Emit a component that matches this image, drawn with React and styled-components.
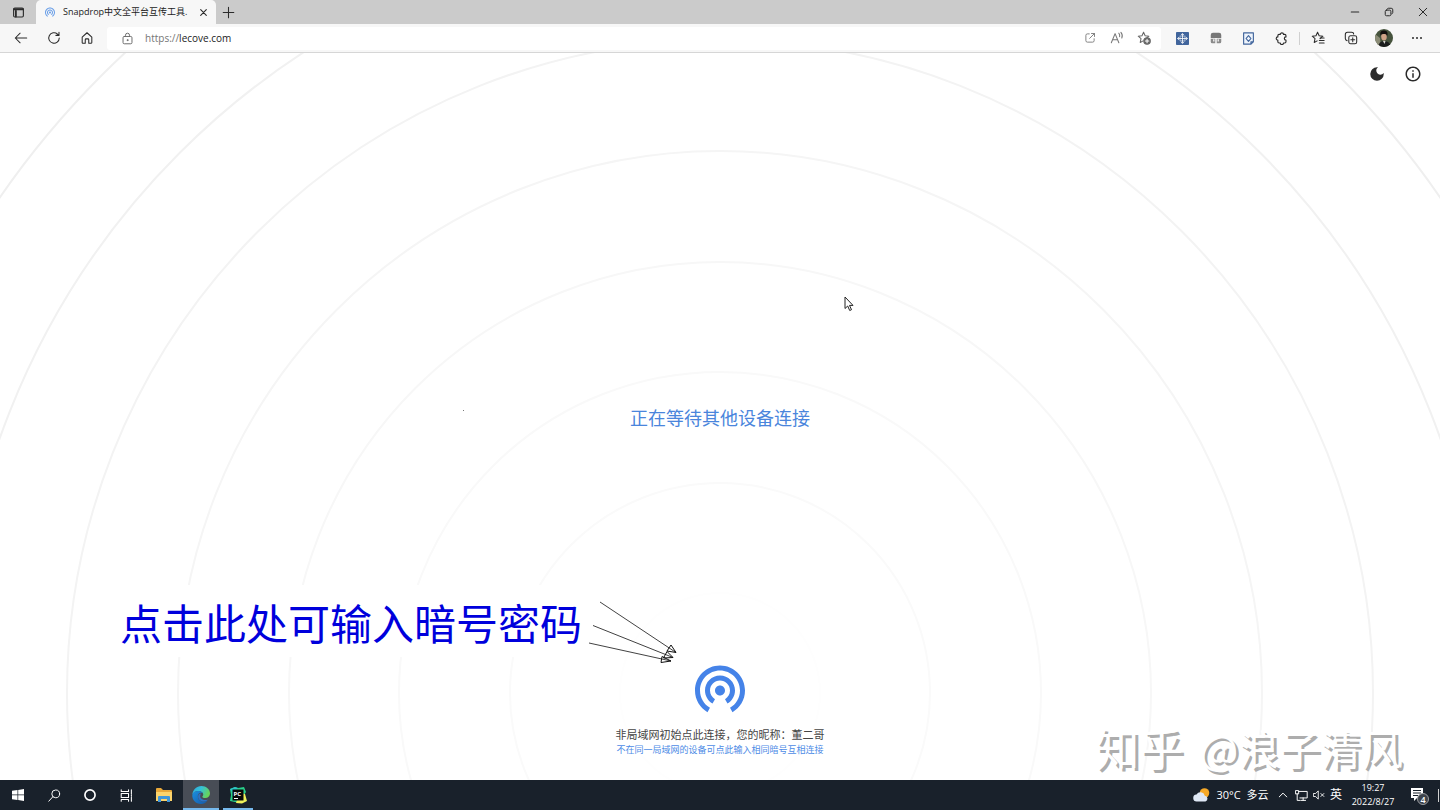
import React from 'react';
import styled, { createGlobalStyle } from 'styled-components';
import { MdDarkMode, MdOutlineInfo, MdWifiTethering } from 'react-icons/md';

const GlobalStyle = createGlobalStyle`
  * {
    box-sizing: border-box;
  }
  body {
    margin: 0;
    font-family: 'Open Sans', 'Noto Sans CJK SC', sans-serif;
    font-size: 9px;
    color: #333;
  }
  button {
    font: inherit;
    color: inherit;
    background: none;
    border: 0;
    padding: 0;
  }
  svg {
    display: block;
    flex: none;
  }
`;

const Desktop = styled.div`
  display: flex;
  flex-direction: column;
  min-height: 100vh;
  overflow: hidden;
`;

const TabStrip = styled.header`
  display: flex;
  height: 24px;
  background: #cbcbcb;
`;

const IconButton = styled.button`
  display: flex;
  align-items: center;
  justify-content: center;
  flex: none;
  width: ${(props) => props.$width || 33}px;
  height: 100%;
  color: ${(props) => props.$color || '#2b2b2b'};
`;

const Tab = styled.div`
  display: flex;
  align-items: center;
  gap: 7px;
  width: 180px;
  padding: 0 5px 0 8px;
  background: #f7f7f7;
  border-radius: 5px 5px 0 0;
`;

const TabTitle = styled.span`
  flex: 1;
  overflow: hidden;
  white-space: nowrap;
  line-height: 16px;
  color: #222;
`;

const WindowButtons = styled.div`
  display: flex;
  margin-left: auto;
`;

const Toolbar = styled.nav`
  display: flex;
  align-items: center;
  height: 29px;
  padding: 0 7px 0 4px;
  background: #f7f7f7;
  border-bottom: 1px solid #d6d6d6;
`;

const AddressBar = styled.label`
  display: flex;
  align-items: center;
  flex: 1;
  height: 23px;
  margin: 0 5px 0 4px;
  padding: 0 4px 0 14px;
  background: #fff;
  border-radius: 3px;
  font-size: 10px;
`;

const Scheme = styled.span`
  margin-left: 11px;
  color: #767676;
`;

const AddressInput = styled.input`
  flex: 1;
  min-width: 0;
  padding: 0;
  border: 0;
  outline: 0;
  background: none;
  font: inherit;
  color: #222;
`;

const Divider = styled.span`
  width: 1px;
  height: 13px;
  margin: 0 1px;
  background: #d0d0d0;
`;

/* every layer of the page shares the one grid cell */
const Stage = styled.main`
  position: relative;
  display: grid;
  grid-template: 1fr / 1fr;
  flex: 1;
  background: #fff;
  > * {
    grid-area: 1 / 1;
  }
`;

const RingsSvg = styled.svg`
  position: absolute;
  inset: 0;
  width: 100%;
  height: 100%;
`;

const StageActions = styled.div`
  z-index: 1;
  display: flex;
  align-self: start;
  justify-self: end;
  height: 42px;
  padding-right: 9px;
`;

const Waiting = styled.h1`
  place-self: center;
  z-index: 1;
  margin: 0;
  padding-top: 2px;
  font-size: 18px;
  font-weight: 400;
  line-height: 24px;
  color: #4a85dc;
`;

const Footer = styled.footer`
  z-index: 1;
  display: flex;
  flex-direction: column;
  align-items: center;
  align-self: end;
  justify-self: center;
  padding-bottom: 23px;
`;

const LogoButton = styled.button`
  margin-bottom: 9px;
  color: #4583e8;
`;

const DisplayName = styled.div`
  font-size: ${(props) => (props.$small ? 9 : 11)}px;
  line-height: ${(props) => (props.$small ? 14 : 16)}px;
  color: ${(props) => (props.$small ? '#4d8be6' : '#444')};
`;

const Callout = styled.div`
  position: absolute;
  left: 112px;
  bottom: 123px;
  z-index: 1;
  display: flex;
`;

const CalloutText = styled.p`
  margin: 0;
  padding: 6px 2px 0 8px;
  background: #fff;
  font-size: 42px;
  line-height: 66px;
  color: #0000dc;
`;

const Watermark = styled.div`
  position: absolute;
  right: 38px;
  bottom: 3px;
  z-index: 1;
  display: flex;
  align-items: center;
  gap: 16px;
  font-family: 'Noto Sans CJK SC', sans-serif;
  font-size: 41px;
  line-height: 60px;
  color: #fff;
  text-shadow: 3px 3px 0 #adadad;
`;

const WatermarkSite = styled.span`
  font-size: 44px;
`;

const Pointer = styled.svg`
  position: absolute;
  left: 844px;
  top: 243px;
`;

const Speck = styled.i`
  position: absolute;
  left: 463px;
  top: 357px;
  width: 1px;
  height: 1px;
  background: #777;
`;

const Taskbar = styled.nav`
  display: flex;
  height: 30px;
  background: #19212b;
  color: #fff;
`;

const Apps = styled.div`
  display: flex;
  gap: 1px;
  margin-left: 2px;
`;

const AppButton = styled.button`
  display: flex;
  align-items: center;
  justify-content: center;
  width: 36px;
  height: 100%;
  padding-bottom: 0;
  background: ${(props) => (props.$active ? '#484d56' : 'none')};
  box-shadow: ${(props) => (props.$active ? 'inset 0 -2px #76b9ed' : 'none')};
`;

const OpenMark = styled.span`
  display: flex;
  align-items: center;
  justify-content: center;
  width: 30px;
  height: 100%;
  box-shadow: inset 0 -2px #76b9ed;
`;

const Tray = styled.div`
  display: flex;
  align-items: center;
  margin-left: auto;
`;

const TrayButton = styled.button`
  display: flex;
  align-items: center;
  justify-content: center;
  gap: 6px;
  width: ${(props) => props.$width}px;
  height: 100%;
  font-size: ${(props) => props.$size || 11}px;
  line-height: 14px;
  white-space: nowrap;
`;

const Clock = styled.time`
  width: 56px;
  text-align: center;
  line-height: 14px;
`;

const Line = ({ size = 14, children, width = 1.2, ...rest }) => (
  <svg
    width={size}
    height={size}
    viewBox="0 0 16 16"
    fill="none"
    stroke="currentColor"
    strokeWidth={width}
    strokeLinecap="round"
    strokeLinejoin="round"
    {...rest}
  >
    {children}
  </svg>
);

const STAR = 'M7.5 1.5l1.8 3.9 4.3.5-3.2 2.9M7.5 1.5L5.7 5.4l-4.3.5 3.2 2.9-.9 4.3 3.3-1.8';

const RING_RADII = [100, 210, 321, 431, 542, 653, 764, 874];
const RING_COLORS = [
  '#fefefe',
  '#fafafa',
  '#f9f9f9',
  '#f7f7f7',
  '#f5f5f5',
  '#f3f3f3',
  '#f1f1f1',
  '#efefef',
];

const Rings = () => (
  <RingsSvg aria-hidden="true">
    <svg x="50%" y="100%" overflow="visible">
      {RING_RADII.map((r, i) => (
        <circle
          key={r}
          cy="-87"
          r={r}
          fill="none"
          stroke={RING_COLORS[i]}
          strokeWidth="2"
        />
      ))}
    </svg>
  </RingsSvg>
);

const Browser = () => (
  <>
    <TabStrip>
      <IconButton $width={36} aria-label="Tab actions">
        <Line size={13} width={1.4}>
          <rect x="2" y="2.5" width="12" height="11" rx="1.5" />
          <path d="M2.5 4h11M4.8 6v7" strokeWidth="2.2" />
        </Line>
      </IconButton>
      <Tab>
        <MdWifiTethering size={12} color="#6a9fe8" />
        <TabTitle>Snapdrop中文全平台互传工具.</TabTitle>
        <IconButton $width={16} aria-label="Close tab">
          <Line size={9} width={2}>
            <path d="M3 3l10 10M13 3L3 13" />
          </Line>
        </IconButton>
      </Tab>
      <IconButton $width={24} aria-label="New tab">
        <Line size={13} width={1.3}>
          <path d="M8 1.5v13M1.5 8h13" />
        </Line>
      </IconButton>
      <WindowButtons>
        <IconButton $width={34} aria-label="Minimize">
          <Line size={10} width={1.7}>
            <path d="M2 8h12" />
          </Line>
        </IconButton>
        <IconButton $width={34} aria-label="Restore">
          <Line size={10} width={1.6}>
            <rect x="2" y="5" width="9" height="9" rx="2" />
            <path d="M5 3.5Q5.5 2 7 2h4.5Q14 2 14 4.5V9q0 1.5-1.5 2" />
          </Line>
        </IconButton>
        <IconButton $width={34} aria-label="Close">
          <Line size={10} width={1.6}>
            <path d="M2 2l12 12M14 2L2 14" />
          </Line>
        </IconButton>
      </WindowButtons>
    </TabStrip>
    <Toolbar>
      <IconButton aria-label="Back">
        <Line>
          <path d="M14.5 8H1.5M7 2.5L1.5 8 7 13.5" />
        </Line>
      </IconButton>
      <IconButton aria-label="Refresh">
        <Line>
          <path d="M14 8a6 6 0 1 1-2-4.5L13.5 5M13.7 1.5V5h-3.5" />
        </Line>
      </IconButton>
      <IconButton aria-label="Home">
        <Line>
          <path d="M2.5 7L8 2l5.5 5v6q0 1-1 1H10V10q0-1-1-1H7q-1 0-1 1v4H3.5q-1 0-1-1z" />
        </Line>
      </IconButton>
      <AddressBar>
        <Line size={13} color="#6b6b6b">
          <rect x="2.5" y="5.5" width="11" height="9" rx="1.5" />
          <path d="M5.5 5.5V4a2.5 2.5 0 0 1 5 0v1.5" />
          <circle cx="8" cy="10" r=".6" fill="currentColor" />
        </Line>
        <Scheme>https://</Scheme>
        <AddressInput defaultValue="lecove.com" aria-label="Address" />
        <IconButton $width={27} $color="#777" aria-label="Open in app">
          <Line size={12}>
            <path d="M7 2.5H4.5q-2 0-2 2v7q0 2 2 2h7q2 0 2-2V9M10 2h4v4M14 2L7.5 8.5" />
          </Line>
        </IconButton>
        <IconButton $width={27} $color="#777" aria-label="Read aloud">
          <Line>
            <path d="M1.5 13.5L5.8 3l4.3 10.5M3 10h5.6M10 2.5q1.5 1.5 1 4M12.5 1.5q2.500 3 1 6.5" />
          </Line>
        </IconButton>
        <IconButton $width={27} $color="#666" aria-label="Add to favorites">
          <Line>
            <path d={STAR} />
            <circle cx="11.5" cy="11.5" r="3.7" fill="currentColor" />
            <path d="M11.5 9.5v4M9.5 11.5h4" stroke="#fff" />
          </Line>
        </IconButton>
      </AddressBar>
      <IconButton aria-label="Move extension">
        <Line size={13} width={1.3} color="#fff">
          <rect width="16" height="16" rx="1" fill="#41659c" stroke="none" />
          <path d="M8 2.5v11M2.5 8h11M6.5 3.5L8 2l1.5 1.5M6.5 12.5L8 14l1.5-1.5M3.5 6.5L2 8l1.5 1.5M12.5 6.5L14 8l-1.5 1.5" strokeWidth="1" />
          <path d="M5 5h6v6H5z" strokeWidth=".7" strokeDasharray="1 1" />
        </Line>
      </IconButton>
      <IconButton aria-label="Script extension">
        <svg width="12" height="12" viewBox="0 0 16 16" fill="#777">
          <path d="M1 8V4q0-3 3-3h8q3 0 3 3v4z" />
          <path d="M1 9h6v6H3q-2 0-2-2zM9 9h6v4q0 2-2 2H9z" fill="#8b8b8b" />
          <path d="M4 9.500h2v3H4zM10 9.500h2v3h-2z" fill="#e8e8e8" />
        </svg>
      </IconButton>
      <IconButton $color="#41659c" aria-label="Page extension">
        <Line size={13} width={1.4}>
          <path d="M2 1h12v11l-3 3H2zM14 12h-3v3" fill="#eef4fc" />
          <path d="M8 4.500L11 8l-3 3.500L5 8z" />
        </Line>
      </IconButton>
      <IconButton aria-label="Extensions">
        <Line size={13} width={1.4}>
          <path d="M5 3h1.5a2 2 0 0 1 4 0H12q1.5 0 1.5 1.5V6a2 2 0 1 0 0 4v2q0 1.500-1.500 1.500h-1.500a2 2 0 0 1-4 0H5q-1.500 0-1.500-1.500v-2a2 2 0 0 1 0-4V4.500Q3.500 3 5 3z" />
        </Line>
      </IconButton>
      <Divider />
      <IconButton aria-label="Favorites">
        <Line>
          <path d={STAR} />
          <path d="M10.500 8h4.500M9.500 10.800h5.500M9.500 13.600h5.500" />
        </Line>
      </IconButton>
      <IconButton aria-label="Collections">
        <Line>
          <rect x="5.5" y="5.5" width="9" height="9" rx="2" />
          <path d="M10 7.800v4.400M7.800 10h4.400M3.500 11Q1.500 10.500 1.500 8.500V4q0-2.500 2.500-2.500h4.500q2.500 0 2.500 2" />
        </Line>
      </IconButton>
      <IconButton aria-label="Profile">
        <svg width="18" height="18" viewBox="0 0 18 18">
          <clipPath id="avatar">
            <circle cx="9" cy="9" r="9" />
          </clipPath>
          <g clipPath="url(#avatar)">
            <rect width="18" height="18" fill="#46533d" />
            <path d="M0 5l5 4 1 9H0z" fill="#8b8c76" />
            <path d="M3 18q1-6 6-6 6 0 7 6z" fill="#1a1c1d" />
            <ellipse cx="9" cy="7.5" rx="2.8" ry="4" fill="#cfa387" />
            <path d="M5.500 7Q4 1 9.500 1.500 14 2 12 8 12 4.500 9 5 6 4.500 5.500 7z" fill="#14110f" />
            <path d="M8 12l1.500 3 1-3z" fill="#d8d8d2" />
          </g>
        </svg>
      </IconButton>
      <IconButton aria-label="Settings and more">
        <svg width="12" height="4" viewBox="0 0 12 4" fill="currentColor">
          <circle cx="2" cy="2" r="1" />
          <circle cx="6" cy="2" r="1" />
          <circle cx="10" cy="2" r="1" />
        </svg>
      </IconButton>
    </Toolbar>
  </>
);

const Snapdrop = () => (
  <Stage>
    <Rings />
    <StageActions>
      <IconButton $width={36} aria-label="Dark theme">
        <MdDarkMode size={18} />
      </IconButton>
      <IconButton $width={36} aria-label="About">
        <MdOutlineInfo size={18} />
      </IconButton>
    </StageActions>
    <Waiting>正在等待其他设备连接</Waiting>
    <Footer>
      <LogoButton aria-label="Connect">
        <MdWifiTethering size={60} />
      </LogoButton>
      <DisplayName>非局域网初始点此连接，您的昵称：董二哥</DisplayName>
      <DisplayName $small>不在同一局域网的设备可点此输入相同暗号互相连接</DisplayName>
    </Footer>
    <Callout>
      <CalloutText>点击此处可输入暗号密码</CalloutText>
      <svg width="96" height="72" viewBox="584 585 96 72" overflow="visible" fill="none" stroke="#111" strokeWidth="1">
        <path d="M600 602l76 50.500M593 625.500l80 32M589 643l82 18" strokeWidth=".8" />
        <path d="M671 645l5 7.500-9-1.500zM667 651.500l6 6-9.500.5zM662 656.500l9 4.500-10 1.500z" />
      </svg>
    </Callout>
    <Watermark>
      <WatermarkSite>知乎</WatermarkSite>
      <span>@浪子清风</span>
    </Watermark>
    <Speck />
    <Pointer width="10" height="16" viewBox="0 0 10 16" fill="#fff" stroke="#222">
      <path d="M1 1v11.500l2.700-2.500 2 4.500 1.800-.8-2-4.300H9z" />
    </Pointer>
  </Stage>
);

const WindowsTaskbar = () => (
  <Taskbar>
    <AppButton aria-label="Start">
      <svg width="12" height="12" viewBox="0 0 12 12" fill="#fff">
        <path d="M0 1.700L5.500 1v4.600H0zM6.200.9L12 0v5.600H6.200zM0 6.300h5.500V11L0 10.300zM6.200 6.300H12V12l-5.800-.9z" />
      </svg>
    </AppButton>
    <AppButton aria-label="Search">
      <Line size={13}>
        <circle cx="9.5" cy="6" r="4.8" />
        <path d="M6 9.500L1 15" />
      </Line>
    </AppButton>
    <AppButton aria-label="Cortana">
      <Line size={14} width={1.9}>
        <circle cx="8" cy="8" r="5.8" />
      </Line>
    </AppButton>
    <AppButton aria-label="Task view">
      <Line size={13} width={1.3}>
        <path d="M1.500 1v2h9V1M1.500 15v-2h9v2M1.500 5.500h9v5h-9zM14 1v5M14 10v5M14 7.500v1" />
      </Line>
    </AppButton>
    <Apps>
      <AppButton aria-label="File Explorer">
        <svg width="16" height="14" viewBox="0 0 16 14">
          <path d="M0 1q0-1 1-1h4l2 2h8q1 0 1 1v9H0z" fill="#e9a93a" />
          <path d="M0 4h16v9H0z" fill="#fbd36b" />
          <path d="M2 14V9q0-1 1-1h10q1 0 1 1v5h-3v-3H5v3z" fill="#3f96d8" />
        </svg>
      </AppButton>
      <AppButton $active aria-label="Edge">
        <svg width="18" height="18" viewBox="0 0 24 24">
          <defs>
            <linearGradient id="edgeTop" x1="0" y1="0" x2="1" y2=".4">
              <stop offset="0" stopColor="#2ba8dc" />
              <stop offset=".5" stopColor="#35c1d8" />
              <stop offset="1" stopColor="#66d45b" />
            </linearGradient>
            <linearGradient id="edgeBottom" x1="0" y1="0" x2="1" y2="1">
              <stop offset="0" stopColor="#1b8fe0" />
              <stop offset="1" stopColor="#1559a8" />
            </linearGradient>
          </defs>
          <path d="M.5 11.500C1 5 6 0 12.500 0 19 0 24 4.500 24 10c0 3.500-2.800 6-6.200 6-2.600 0-4-.9-4-1.800 0-.6 1.200-1 1.200-3.200C15 8.500 12 6.500 8.500 6.500 4.500 6.500 1.500 8.500.5 11.500z" fill="url(#edgeTop)" />
          <path d="M.4 12C1 8.500 4.500 6.500 8.500 6.500c3 0 5.200 1.300 6 3-5-1.500-7.500 2-6.500 6 1 4.500 6 6.500 12.500 3.800C18.500 22.500 15.500 24 12 24 5 24 0 18.500.4 12z" fill="url(#edgeBottom)" />
          <path d="M9 11c-2.500 4 .5 9.500 6 9.500 3 0 5-.9 6.800-2.500-4 1.500-8.300.5-10.200-2C10.500 14.500 10.700 12 12 10c-1.200 0-2.200.2-3 1z" fill="#2d72c4" />
        </svg>
      </AppButton>
      <AppButton aria-label="PyCharm">
        <OpenMark>
          <svg width="18" height="18" viewBox="0 0 18 18">
            <path d="M1 3l5-2 3 1 6-1 2 5-2 3 2 6-5 2-6-1-5-1 1-6z" fill="#29d08b" />
            <path d="M10 7l6 1 2 7-5 2.500L7 17z" fill="#f0f15a" />
            <path d="M1 3l5-2 3 1-5 5z" fill="#2cc4c9" />
            <rect x="3.5" y="3.5" width="11" height="11" fill="#080808" />
            <text x="4.5" y="9.5" fontSize="6" fontWeight="700" fontFamily="Open Sans, sans-serif" fill="#fff">
              PC
            </text>
            <path d="M5 12.500h4" stroke="#fff" />
          </svg>
        </OpenMark>
      </AppButton>
    </Apps>
    <Tray>
      <TrayButton $width={84} aria-label="Weather">
        <svg width="17" height="14" viewBox="0 0 17 14">
          <circle cx="11.5" cy="5" r="4.8" fill="#f6a928" />
          <path d="M4 13.500a3.500 3.500 0 0 1-.5-7 4.500 4.500 0 0 1 8.300 1.200 3 3 0 0 1 .7 5.800z" fill="#dfe8f5" />
        </svg>
        <span>30°C</span>
        <span>多云</span>
      </TrayButton>
      <TrayButton $width={20} aria-label="Hidden icons">
        <Line size={10} width={1.6}>
          <path d="M2 11l6-6 6 6" />
        </Line>
      </TrayButton>
      <TrayButton $width={17} aria-label="Network">
        <Line size={13} width={1.2}>
          <path d="M4.500 3H15v8H6M7 14h6M10 11v3M1 2h3.500v4H1zM2.700 6v8h3" />
        </Line>
      </TrayButton>
      <TrayButton $width={17} aria-label="Volume">
        <Line size={12} width={1.2}>
          <path d="M1 6h2.500L7 2.500v11L3.500 10H1zM10.500 6l4 4M14.500 6l-4 4" />
        </Line>
      </TrayButton>
      <TrayButton $width={18} $size={12}>英</TrayButton>
      <Clock>
        19:27
        <br />
        2022/8/27
      </Clock>
      <TrayButton $width={36} aria-label="Notifications">
        <svg width="20" height="20" viewBox="0 0 20 20">
          <path d="M2 3h12v10H8l-3 3v-3H2z" fill="#fff" />
          <path d="M4 5.500h8M4 8h8M4 10.500h5" stroke="#19212b" />
          <circle cx="14" cy="14" r="5.5" fill="#3d434b" stroke="#9a9da1" />
          <text x="14" y="17.5" fontSize="9" fontWeight="600" textAnchor="middle" fill="#fff">
            4
          </text>
        </svg>
      </TrayButton>
      <Divider />
    </Tray>
  </Taskbar>
);

const App = () => (
  <Desktop>
    <GlobalStyle />
    <Browser />
    <Snapdrop />
    <WindowsTaskbar />
  </Desktop>
);

export default App;
